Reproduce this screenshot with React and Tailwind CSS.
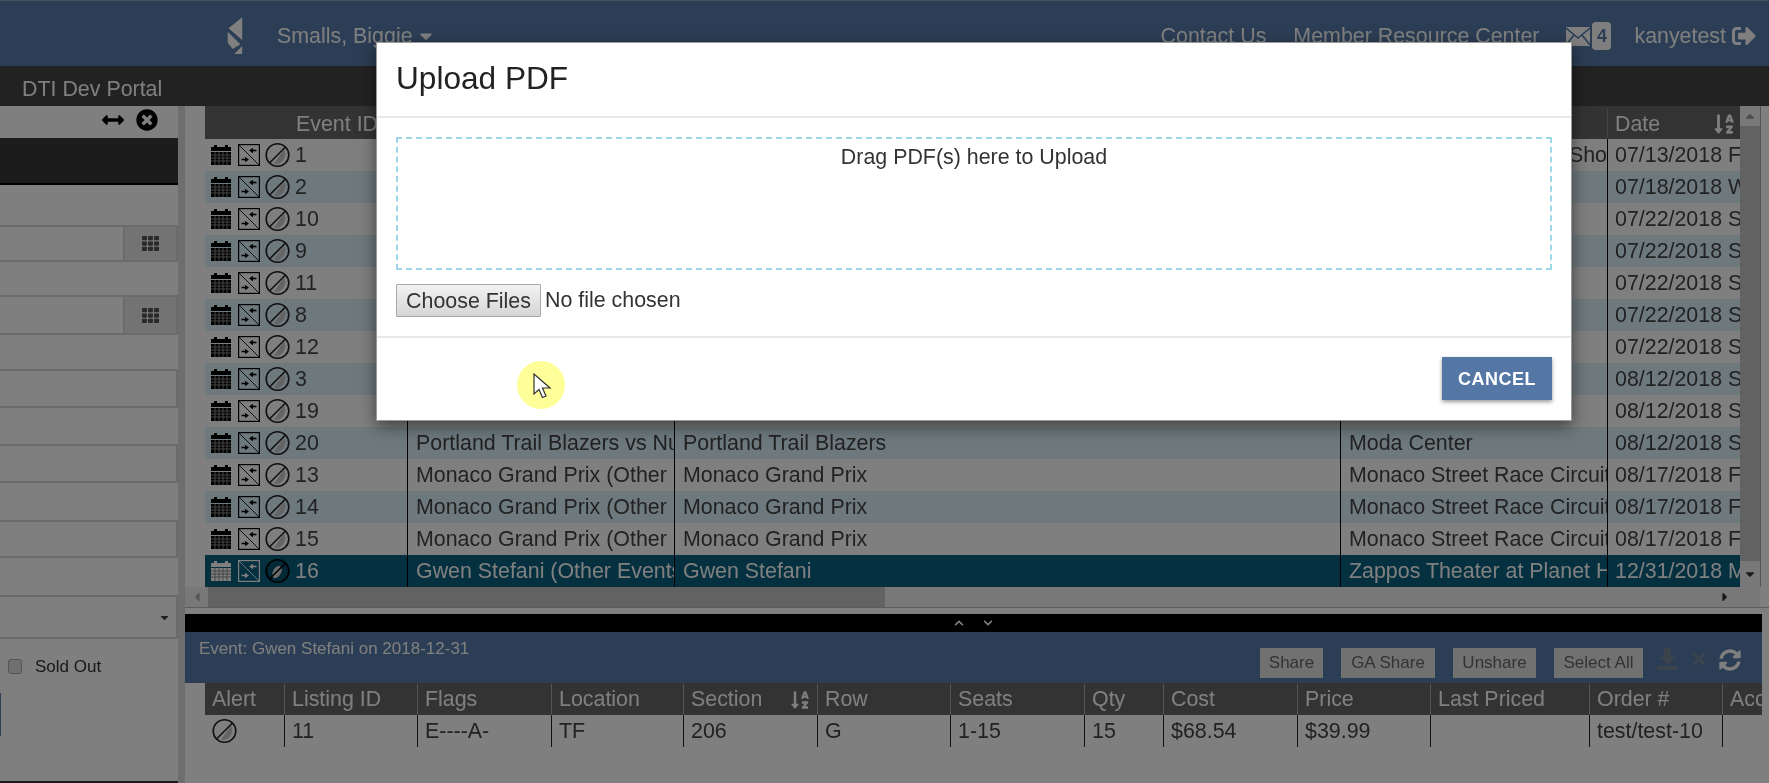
import React from "react";
import { FaSortAlphaDown, FaSignOutAlt, FaTh, FaTimes, FaSyncAlt, FaCaretDown, FaChevronUp, FaChevronDown, FaCaretUp, FaCaretLeft, FaCaretRight, FaTimesCircle, FaArrowsAltH } from "react-icons/fa";

const rows = [
    { id: "1", venue: "Sho", date: "07/13/2018 Fri", right: true },
    { id: "2", date: "07/18/2018 Wed" },
    { id: "10", date: "07/22/2018 Sun" },
    { id: "9", date: "07/22/2018 Sun" },
    { id: "11", date: "07/22/2018 Sun" },
    { id: "8", date: "07/22/2018 Sun" },
    { id: "12", date: "07/22/2018 Sun" },
    { id: "3", date: "08/12/2018 Sun" },
    { id: "19", date: "08/12/2018 Sun" },
    { id: "20", name: "Portland Trail Blazers vs Nuggets", performer: "Portland Trail Blazers", venue: "Moda Center", date: "08/12/2018 Sun" },
    { id: "13", name: "Monaco Grand Prix (Other Events)", performer: "Monaco Grand Prix", venue: "Monaco Street Race Circuit", date: "08/17/2018 Fri" },
    { id: "14", name: "Monaco Grand Prix (Other Events)", performer: "Monaco Grand Prix", venue: "Monaco Street Race Circuit", date: "08/17/2018 Fri" },
    { id: "15", name: "Monaco Grand Prix (Other Events)", performer: "Monaco Grand Prix", venue: "Monaco Street Race Circuit", date: "08/17/2018 Fri" },
    { id: "16", name: "Gwen Stefani (Other Events)", performer: "Gwen Stefani", venue: "Zappos Theater at Planet Hollywood", date: "12/31/2018 Mon", selected: true },
];

const listing = [
    ["Alert", ""],
    ["Listing ID", "11"],
    ["Flags", "E----A-"],
    ["Location", "TF"],
    ["Section", "206"],
    ["Row", "G"],
    ["Seats", "1-15"],
    ["Qty", "15"],
    ["Cost", "$68.54"],
    ["Price", "$39.99"],
    ["Last Priced", ""],
    ["Order #", "test/test-10"],
    ["Acct", ""],
];

const CalendarIcon = () => (
    <svg width="20" height="22" viewBox="0 0 20 22" className="shrink-0">
        <rect x="3" y="1" width="3" height="3" fill="currentColor" />
        <rect x="14" y="1" width="3" height="3" fill="currentColor" />
        <rect x="0" y="3" width="20" height="4" fill="currentColor" />
        <rect x="0" y="8" width="20" height="13" fill="currentColor" />
        <path d="M0 11h20M0 14h20M0 17h20M4 8v13M8 8v13M12 8v13M16 8v13" stroke="#8a8a8a" strokeWidth="1" />
    </svg>
);

const TransferIcon = () => (
    <svg width="22" height="22" viewBox="0 0 22 22" className="shrink-0" fill="none">
        <rect x="0.6" y="0.6" width="20.8" height="20.8" stroke="currentColor" strokeWidth="1.2" />
        <path d="M1 1l20 20" stroke="currentColor" strokeWidth="0.9" />
        <path d="M18.5 6.5h-4" stroke="currentColor" strokeWidth="1.6" />
        <path d="M15 3.8v5.4l-4-2.7z" fill="currentColor" />
        <path d="M3.5 15.5h4" stroke="currentColor" strokeWidth="1.6" />
        <path d="M7 12.8v5.4l4-2.7z" fill="currentColor" />
    </svg>
);

const BanIcon = ({ selected }) => (
    <svg width="25" height="26" viewBox="0 0 25 26" className="shrink-0" fill="none">
        <circle cx="12.5" cy="13" r="11.3" stroke={selected ? "#000" : "#222"} strokeWidth="1.6" fill={selected ? "#07506a" : "none"} />
        {selected && <ellipse cx="12" cy="14" rx="4" ry="6.5" fill="#d8d8d8" transform="rotate(30 12 14)" />}
        {!selected && <path d="M19 7.5A10 10 0 0 1 9 22z" fill="#c8c8c8" />}
        <path d="M20.5 5L4.5 21" stroke={selected ? "#000" : "#222"} strokeWidth="1.6" />
    </svg>
);

const SidebarInput = ({ className, addon, children }) => (
    <div className={`flex border-y-2 border-r-2 border-[#d6d6d6] ${className}`}>
        <div className="flex-1 flex items-center justify-end pr-[5px]">{children}</div>
        {addon && (
            <div className="w-[53px] flex items-center justify-center bg-[#e6e6e6] border-l-2 border-[#d6d6d6]">
                <FaTh className="text-[#555] text-[17px]" />
            </div>
        )}
    </div>
);

function Sidebar() {
    return (
        <div className="w-[178px] shrink-0 flex flex-col border-b-2 border-[#333]">
            <div className="h-[32px] flex items-center justify-end gap-[12px] pr-[20px] pb-[5px] text-black">
                <FaArrowsAltH className="text-[22px]" />
                <FaTimesCircle className="text-[22px]" />
            </div>
            <div className="h-[47px] bg-[#383838] border-b-2 border-black" />
            <SidebarInput className="mt-[40px] h-[37px]" addon />
            <SidebarInput className="mt-[33px] h-[40px]" addon />
            <SidebarInput className="mt-[34px] h-[39px]" />
            <SidebarInput className="mt-[36px] h-[39px]" />
            <SidebarInput className="mt-[37px] h-[38px]" />
            <SidebarInput className="mt-[37px] h-[44px]">
                <FaCaretDown className="text-[#444] text-[13px]" />
            </SidebarInput>
            <div className="mt-[20px] h-[15px] flex items-center gap-[13px] pl-[8px]">
                <div className="w-[14px] h-[15px] rounded-[3px] border border-[#aaa] bg-[#e0e0e0]" />
                <span className="text-[17px] text-[#333]">Sold Out</span>
            </div>
            <div className="mt-[19px] w-px h-[43px] bg-[#587caa]" />
        </div>
    );
}

function EventTable() {
    return (
        <div className="h-[508px] flex flex-col">
            <div className="flex pl-[20px]">
                <div className="w-[1535px] text-[21.4px]">
                    <div className="h-[33px] pt-[2px] grid grid-cols-[203px_267px_666px_267px_132px] bg-[#666] text-white">
                        <div className="pl-[91px] flex items-center">Event ID</div>
                        <div />
                        <div />
                        <div className="border-r border-[#888]" />
                        <div className="pl-[7px] pr-[5px] flex items-center justify-between">
                            <span>Date</span>
                            <FaSortAlphaDown className="text-[22px]" />
                        </div>
                    </div>
                    {rows.map((row, i) => (
                        <div
                            key={row.id}
                            className={`h-[32px] grid grid-cols-[203px_267px_666px_267px_132px] leading-[32px] whitespace-nowrap ${
                                row.selected ? "bg-[#086080] text-white" : i % 2 === 1 ? "bg-[#dbf2fa] text-[#444]" : "bg-white text-[#444]"
                            }`}
                        >
                            <div className={`flex items-center pl-[6px] border-r border-black ${row.selected ? "text-white" : "text-black"}`}>
                                <CalendarIcon />
                                <div className="w-[7px]" />
                                <TransferIcon />
                                <div className="w-[5px]" />
                                <BanIcon selected={row.selected} />
                                <span className={`ml-[5px] ${row.selected ? "text-white" : "text-[#444]"}`}>{row.id}</span>
                            </div>
                            <div className="pl-[8px] overflow-hidden border-r border-black">{row.name}</div>
                            <div className="pl-[8px] overflow-hidden border-r border-black">{row.performer}</div>
                            <div className={`pl-[8px] overflow-hidden border-r border-black ${row.right ? "text-right" : ""}`}>{row.venue}</div>
                            <div className="pl-[7px] overflow-hidden">{row.date}</div>
                        </div>
                    ))}
                </div>
                <div className="w-[20px] flex flex-col items-center bg-[#f1f1f1] text-[#999]">
                    <div className="h-[20px] flex items-center"><FaCaretUp className="text-[14px]" /></div>
                    <div className="w-full h-[435px] bg-[#c4c4c4]" />
                    <div className="flex-1 flex items-center text-[#333]"><FaCaretDown className="text-[14px]" /></div>
                </div>
                <div className="flex-1 border-l border-[#aaa]" />
            </div>
            <div className="h-[20px] w-[1575px] flex items-center bg-[#f1f1f1]">
                <div className="w-[23px] flex justify-center text-[#aaa]"><FaCaretLeft className="text-[14px]" /></div>
                <div className="w-[677px] h-full bg-[#c4c4c4]" />
                <div className="flex-1 flex justify-end pr-[28px] text-[#333]"><FaCaretRight className="text-[14px]" /></div>
            </div>
            <div className="flex-1 border-t border-[#bbb]" />
        </div>
    );
}

function ListingPanel() {
    return (
        <div className="w-[1577px]">
            <div className="h-[18px] bg-black flex items-center justify-center gap-[19px] text-white text-[10px]">
                <FaChevronUp />
                <FaChevronDown />
            </div>
            <div className="h-[51px] bg-[#587caa] flex justify-between pl-[14px] pr-[21px] text-[17px]">
                <div className="text-white pt-[4px]">Event: Gwen Stefani on 2018-12-31</div>
                <div className="flex items-start pt-[16px]">
                    <button className="w-[63px] h-[30px] bg-[#e2e2e2] text-[#666]">Share</button>
                    <button className="ml-[18px] w-[94px] h-[30px] bg-[#e2e2e2] text-[#666]">GA Share</button>
                    <button className="ml-[18px] w-[83px] h-[30px] bg-[#e2e2e2] text-[#666]">Unshare</button>
                    <button className="ml-[18px] w-[89px] h-[30px] bg-[#e2e2e2] text-[#666]">Select All</button>
                    <svg width="21" height="22" viewBox="0 0 21 22" className="ml-[14px] text-[#778899]" fill="currentColor">
                        <path d="M7 0h7v9h5l-8.5 8L2 9h5z" />
                        <rect y="18" width="21" height="4" />
                    </svg>
                    <FaTimes className="ml-[12px] mt-[2px] w-[18px] h-[18px] text-[#778899]" />
                    <FaSyncAlt className="ml-[11px] w-[22px] h-[24px] text-white" />
                </div>
            </div>
            <div className="pl-[20px] text-[21.4px]">
                <div className="h-[32px] pt-[1px] grid grid-cols-[80px_133px_134px_132px_134px_133px_134px_79px_134px_133px_159px_133px_39px] bg-[#666] text-white overflow-hidden whitespace-nowrap">
                    {listing.map(([title]) => (
                        <div key={title} className="flex items-center justify-between pl-[7px] pr-[7px] border-r border-[#aaa] last:border-r-0 overflow-hidden">
                            <span>{title}</span>
                            {title === "Section" && <FaSortAlphaDown className="text-[20px] shrink-0" />}
                        </div>
                    ))}
                </div>
                <div className="h-[32px] grid grid-cols-[80px_133px_134px_132px_134px_133px_134px_79px_134px_133px_159px_133px_39px] text-[#444] leading-[32px]">
                    {listing.map(([title, value]) => (
                        <div key={title} className="pl-[7px] border-r border-[#222] last:border-r-0">
                            {title === "Alert" ? <div className="pt-[3px] text-black"><BanIcon /></div> : value}
                        </div>
                    ))}
                </div>
            </div>
        </div>
    );
}

function UploadModal() {
    return (
        <div className="absolute left-[376px] top-[42px] w-[1196px] bg-white text-[#333] border border-[#999] shadow-[0_5px_15px_rgba(0,0,0,0.5)]">
            <div className="h-[75px] flex items-center px-[19px] pb-[1px] border-b-2 border-[#e8e8e8]">
                <h4 className="text-[31.6px] text-[#222]">Upload PDF</h4>
            </div>
            <div className="px-[19px] pt-[19px] pb-[19px] border-b-2 border-[#e8e8e8]">
                <div className="h-[133px] border-2 border-dashed border-[#9cd8e8] text-center text-[21.4px] pt-[2px]">
                    Drag PDF(s) here to Upload
                </div>
                <div className="mt-[14px] flex items-center text-[21.4px]">
                    <button className="w-[145px] h-[33px] border border-[#a9a9a9] rounded-[1px] bg-gradient-to-b from-[#f2f2f2] to-[#d6d6d6]">Choose Files</button>
                    <span className="ml-[4px]">No file chosen</span>
                </div>
            </div>
            <div className="flex justify-end px-[19px] pt-[19px] pb-[20px]">
                <button className="w-[110px] h-[43px] pt-[1px] bg-[#5577a6] text-white font-bold text-[18px] tracking-[0.5px] shadow-[0_2px_4px_rgba(0,0,0,0.4)]">CANCEL</button>
            </div>
        </div>
    );
}

export default function App() {
    return (
        <div className="relative w-[1769px] h-[783px] overflow-hidden bg-white blur-[0.4px] font-['Liberation_Sans',Arial,sans-serif]">
            <div className="h-[66px] flex items-center pt-[5px] bg-[#587caa] border-t border-[#8fa6c0] text-white text-[21.4px]">
                <svg width="16" height="38" viewBox="0 0 16 38" className="ml-[227px]" fill="#fff">
                    <polygon points="15.2,0.3 15.2,23 1.5,11.3" />
                    <polygon points="0.7,14.7 13.3,27.3 5.7,32 0.7,25.7" />
                    <polygon points="15.2,29 15.2,37 7.2,37" />
                </svg>
                <span className="ml-[34px]">Smalls, Biggie</span>
                <FaCaretDown className="ml-[3px] text-[20px]" />
                <span className="ml-auto">Contact Us</span>
                <span className="ml-[27px]">Member Resource Center</span>
                <svg width="24" height="19" viewBox="0 0 24 19" className="ml-[27px]">
                    <rect width="24" height="19" fill="#fff" />
                    <path d="M0 1l12 10L24 1M0 18l8-10M24 18l-8-10" stroke="#587caa" strokeWidth="1.6" fill="none" />
                </svg>
                <span className="ml-[2px] w-[19px] h-[28px] rounded-[4px] bg-white text-[#587caa] font-bold text-[18px] flex items-center justify-center">4</span>
                <span className="ml-[23px]">kanyetest</span>
                <FaSignOutAlt className="ml-[6px] mr-[13px] text-[24px]" />
            </div>
            <div className="h-[40px] flex items-center pl-[22px] pt-[6px] bg-[#444] text-white text-[21.4px]">DTI Dev Portal</div>
            <div className="flex h-[677px]">
                <Sidebar />
                <div className="w-[7px] bg-[#dcdcdc] shrink-0" />
                <div className="flex-1 min-w-0">
                    <EventTable />
                    <ListingPanel />
                </div>
            </div>

            {/* modal backdrop */}
            <div className="absolute inset-0 bg-black/50" />
            <UploadModal />

            {/* recorded mouse pointer */}
            <div className="absolute left-[517px] top-[361px] w-[48px] h-[48px] rounded-full bg-[#ffff99]" />
            <svg className="absolute left-[533px] top-[373px]" width="19" height="26" viewBox="0 0 19 26">
                <path d="M1 1v20l5-4.5 3.5 8 3.5-1.5-3.5-8H17z" fill="#fff" stroke="#333" strokeWidth="1.2" />
            </svg>
        </div>
    );
}
